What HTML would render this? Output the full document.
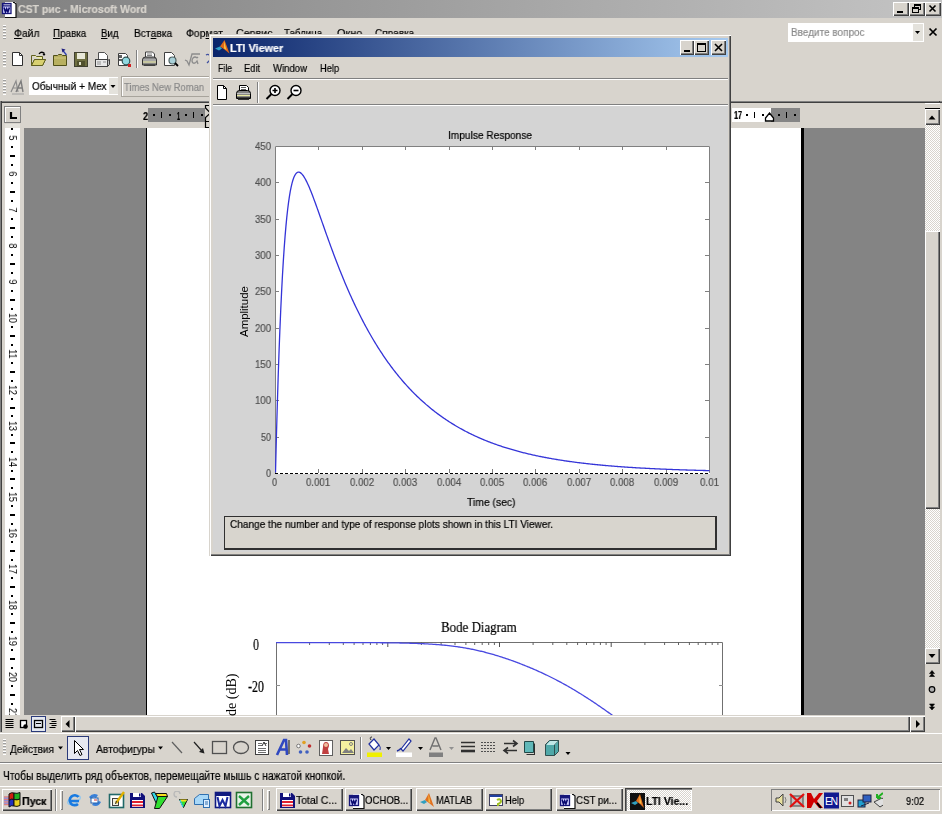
<!DOCTYPE html><html><head><meta charset="utf-8"><style>
html,body{margin:0;padding:0;}
body{width:942px;height:814px;position:relative;overflow:hidden;background:#D8D4CD;font-family:"Liberation Sans",sans-serif;font-size:11px;color:#000;}
div,svg{box-sizing:border-box;}
u{text-decoration:underline;text-underline-offset:1px;text-decoration-thickness:1px;}
</style></head><body>
<div style="position:absolute;left:0px;top:0px;width:942px;height:18px;background:linear-gradient(90deg,#808080,#C4C4C4);"></div>
<svg style="position:absolute;left:0px;top:0px;" width="18" height="18" viewBox="0 0 18 18"><rect x="5" y="2" width="11" height="15" fill="#fff"/><path d="M13 2.5 h1.5 l1.5 1.5 V17.5 H5" fill="none" stroke="#101010" stroke-width="1.2"/><rect x="2.5" y="3.5" width="8.5" height="10" fill="#D0D0FF" stroke="#16167A" stroke-width="1.3"/><rect x="3" y="4" width="8" height="2.5" fill="#16167A"/><path d="M3.5 4.8 h7" stroke="#fff" stroke-width="0.8"/><path d="M4 7.5 l1.5 4.5 l1.2 -3 l1.2 3 l1.5 -4.5" fill="none" stroke="#0A0A70" stroke-width="1.6"/></svg>
<div style="position:absolute;left:18.00px;top:4px;white-space:nowrap;font-family:'Liberation Sans',sans-serif;font-size:11px;line-height:11px;font-weight:bold;color:#D8D4CD;will-change:transform;-webkit-text-stroke:0.2px currentColor;transform-origin:0 0;transform:scaleX(0.9540);">CST рис - Microsoft Word</div>
<div style="position:absolute;left:893px;top:2px;width:16px;height:14px;background:#D8D4CD;box-shadow:inset 1px 1px 0 #fff,inset -1px -1px 0 #404040,inset -2px -2px 0 #808080;"></div>
<div style="position:absolute;left:909px;top:2px;width:16px;height:14px;background:#D8D4CD;box-shadow:inset 1px 1px 0 #fff,inset -1px -1px 0 #404040,inset -2px -2px 0 #808080;"></div>
<div style="position:absolute;left:925px;top:2px;width:16px;height:14px;background:#D8D4CD;box-shadow:inset 1px 1px 0 #fff,inset -1px -1px 0 #404040,inset -2px -2px 0 #808080;"></div>
<svg style="position:absolute;left:893px;top:2px;" width="48" height="14" viewBox="0 0 48 14"><rect x="4" y="9" width="6" height="2" fill="#000"/><rect x="21.5" y="2.5" width="6" height="5" fill="none" stroke="#000"/><rect x="21" y="2" width="7" height="2" fill="#000"/><rect x="19.5" y="5.5" width="6" height="5" fill="#D8D4CD" stroke="#000"/><rect x="19" y="5" width="7" height="2" fill="#000"/><path d="M36.5 3.5 L42.5 9.5 M42.5 3.5 L36.5 9.5" stroke="#000" stroke-width="1.6"/></svg>
<div style="position:absolute;left:3px;top:25px;width:3px;height:15px;background:repeating-linear-gradient(180deg,#fff 0 1px,#a0a0a0 1px 2px,transparent 2px 3px);"></div>
<div style="position:absolute;left:14.00px;top:28px;white-space:nowrap;font-family:'Liberation Sans',sans-serif;font-size:11px;line-height:11px;will-change:transform;-webkit-text-stroke:0.2px currentColor;transform-origin:0 0;transform:scaleX(0.9390);"><u>Ф</u>айл</div>
<div style="position:absolute;left:53.00px;top:28px;white-space:nowrap;font-family:'Liberation Sans',sans-serif;font-size:11px;line-height:11px;will-change:transform;-webkit-text-stroke:0.2px currentColor;transform-origin:0 0;transform:scaleX(0.8938);"><u>П</u>равка</div>
<div style="position:absolute;left:101.00px;top:28px;white-space:nowrap;font-family:'Liberation Sans',sans-serif;font-size:11px;line-height:11px;will-change:transform;-webkit-text-stroke:0.2px currentColor;transform-origin:0 0;transform:scaleX(0.8788);"><u>В</u>ид</div>
<div style="position:absolute;left:134.00px;top:28px;white-space:nowrap;font-family:'Liberation Sans',sans-serif;font-size:11px;line-height:11px;will-change:transform;-webkit-text-stroke:0.2px currentColor;transform-origin:0 0;transform:scaleX(0.9337);">Вст<u>а</u>вка</div>
<div style="position:absolute;left:186.00px;top:28px;white-space:nowrap;font-family:'Liberation Sans',sans-serif;font-size:11px;line-height:11px;will-change:transform;-webkit-text-stroke:0.2px currentColor;transform-origin:0 0;transform:scaleX(0.9478);">Фор<u>м</u>ат</div>
<div style="position:absolute;left:236.00px;top:28px;white-space:nowrap;font-family:'Liberation Sans',sans-serif;font-size:11px;line-height:11px;will-change:transform;-webkit-text-stroke:0.2px currentColor;transform-origin:0 0;transform:scaleX(0.9694);">С<u>е</u>рвис</div>
<div style="position:absolute;left:284.00px;top:28px;white-space:nowrap;font-family:'Liberation Sans',sans-serif;font-size:11px;line-height:11px;will-change:transform;-webkit-text-stroke:0.2px currentColor;transform-origin:0 0;transform:scaleX(0.8861);">Т<u>а</u>блица</div>
<div style="position:absolute;left:337.00px;top:28px;white-space:nowrap;font-family:'Liberation Sans',sans-serif;font-size:11px;line-height:11px;will-change:transform;-webkit-text-stroke:0.2px currentColor;transform-origin:0 0;transform:scaleX(0.9826);"><u>О</u>кно</div>
<div style="position:absolute;left:375.00px;top:28px;white-space:nowrap;font-family:'Liberation Sans',sans-serif;font-size:11px;line-height:11px;will-change:transform;-webkit-text-stroke:0.2px currentColor;transform-origin:0 0;transform:scaleX(0.9084);"><u>С</u>правка</div>
<div style="position:absolute;left:788px;top:23px;width:136px;height:19px;background:#fff;"></div>
<div style="position:absolute;left:913px;top:24px;width:10px;height:17px;background:#E4E2DC;"></div>
<svg style="position:absolute;left:913px;top:30px;" width="10" height="5" viewBox="0 0 10 5"><path d="M2 1 h5 l-2.5 3z" fill="#000"/></svg>
<div style="position:absolute;left:791.00px;top:27px;white-space:nowrap;font-family:'Liberation Sans',sans-serif;font-size:11px;line-height:11px;color:#8a8a8a;will-change:transform;-webkit-text-stroke:0.2px currentColor;transform-origin:0 0;transform:scaleX(0.9067);">Введите вопрос</div>
<svg style="position:absolute;left:928px;top:26px;" width="11" height="12" viewBox="0 0 11 12"><path d="M1.5 2.5 L8.5 9.5 M8.5 2.5 L1.5 9.5" stroke="#000" stroke-width="1.7"/></svg>
<div style="position:absolute;left:3px;top:51px;width:3px;height:16px;background:repeating-linear-gradient(180deg,#fff 0 1px,#a0a0a0 1px 2px,transparent 2px 3px);"></div>
<svg style="position:absolute;left:11px;top:51px;" width="14" height="16" viewBox="0 0 14 16"><path d="M1.5 1.5 h7 l3 3 v10 h-10z" fill="#fff" stroke="#303030"/><path d="M8.5 1.5 v3 h3" fill="none" stroke="#303030"/></svg>
<svg style="position:absolute;left:30px;top:51px;" width="17" height="16" viewBox="0 0 17 16"><path d="M1.5 4.5 h4 l1 1 h6 v3" fill="#F0F0A0" stroke="#606020"/><path d="M1.5 4.5 v10 h11 l3 -6 h-11 l-3 6" fill="#E8E88C" stroke="#606020"/><path d="M4.5 8.5 h11 l-3 6 h-11z" fill="#D8D070" stroke="#606020"/><path d="M9 3 q2 -3 5 -1 l0 2" fill="none" stroke="#000" stroke-width="1.3"/><path d="M12.5 3 h3 l-1.5 2z" fill="#000"/></svg>
<svg style="position:absolute;left:52px;top:47px;" width="16" height="20" viewBox="0 0 16 20"><path d="M1.5 8.5 h4 l1 -1 h3 l1 1 h4 v10 h-13z" fill="#B8B060" stroke="#505018"/><path d="M2 11 h12" stroke="#D0C880"/><path d="M14.5 8 L10.5 3" stroke="#3040B0" stroke-width="1.3" fill="none"/><path d="M9.5 1.5 l4 1 l-3 3z" fill="#202080"/></svg>
<svg style="position:absolute;left:73px;top:51px;" width="16" height="16" viewBox="0 0 16 16"><rect x="1.5" y="1.5" width="13" height="14" fill="#6E6E40" stroke="#404030"/><rect x="4" y="2" width="8" height="6" fill="#E8E8D8"/><rect x="4" y="10" width="8" height="5" fill="#50502C"/><rect x="6" y="11" width="2" height="3" fill="#E0E0C8"/></svg>
<svg style="position:absolute;left:94px;top:51px;" width="17" height="17" viewBox="0 0 17 17"><path d="M4.5 8 v-6.5 h6 l3 3 v4" fill="#fff" stroke="#505050"/><rect x="1.5" y="8.5" width="12" height="7" fill="#E8E8E8" stroke="#404040"/><path d="M3 11h4M3 13h4M9 11h3" stroke="#909090"/><path d="M13.5 9.5 v6 l2 -2 v-5z" fill="#C0C0C0" stroke="#404040"/></svg>
<svg style="position:absolute;left:116px;top:51px;" width="17" height="17" viewBox="0 0 17 17"><path d="M2.5 2.5 h7 l2 2 v10 h-9z" fill="#fff" stroke="#404040"/><rect x="3" y="4" width="3" height="3" fill="#606060"/><rect x="3" y="8" width="3" height="2" fill="#606060"/><circle cx="10" cy="10" r="3.8" fill="#90D8E0" stroke="#305050" stroke-width="1.2"/><rect x="12" y="13" width="3" height="3" fill="#D02020"/></svg>
<div style="position:absolute;left:136px;top:50px;width:2px;height:18px;border-left:1px solid #808080;border-right:1px solid #fff;"></div>
<svg style="position:absolute;left:141px;top:51px;" width="17" height="16" viewBox="0 0 17 16"><path d="M4.5 6 v-5 h7 l2 2 v3" fill="#fff" stroke="#404040"/><path d="M6 3h5M6 4.5h5" stroke="#808080"/><path d="M1.5 9 q0 -3 3 -3 h8 q3 0 3 3 v5 h-14z" fill="#888888" stroke="#303030"/><path d="M2 9 h13" stroke="#C8C8C8"/><path d="M2 11 h13" stroke="#F0F0B0" stroke-width="1.2"/><rect x="3" y="13.5" width="11" height="1.5" fill="#404040"/></svg>
<svg style="position:absolute;left:163px;top:51px;" width="17" height="17" viewBox="0 0 17 17"><path d="M1.5 1.5 h7 l3 3 v10 h-10z" fill="#fff" stroke="#404040"/><circle cx="9.5" cy="9.5" r="3.5" fill="#A8D0D8" stroke="#506060" stroke-width="1.2"/><path d="M12 12 l3 3" stroke="#000" stroke-width="1.8"/></svg>
<svg style="position:absolute;left:184px;top:51px;" width="17" height="16" viewBox="0 0 17 16"><path d="M1 9 l2 1 l2 4 l3 -11 h8" fill="none" stroke="#8c8c8c" stroke-width="1.3"/><path d="M13 7 q-2 -2 -4 0 q-2 3 0 5 q2 1 4 -2 l1 3 M13 7 l1 -1" fill="none" stroke="#8c8c8c" stroke-width="1.3"/></svg>
<svg style="position:absolute;left:205px;top:51px;" width="5" height="16" viewBox="0 0 5 16"><path d="M1 4 q3 -2 4 2 M2 12 l3 -3" stroke="#4050A0" stroke-width="1.3" fill="none"/></svg>
<div style="position:absolute;left:3px;top:79px;width:3px;height:16px;background:repeating-linear-gradient(180deg,#fff 0 1px,#a0a0a0 1px 2px,transparent 2px 3px);"></div>
<svg style="position:absolute;left:9px;top:79px;" width="17" height="16" viewBox="0 0 17 16"><path d="M2 13 l5 -11 l2 11 M4 9 h4" fill="none" stroke="#8c8c8c" stroke-width="1.2"/><path d="M7 13 l5 -11 l2 11 M9 9 h4" fill="none" stroke="#7c7c7c" stroke-width="1.4"/><path d="M3 15 h12" stroke="#a0a0a0"/></svg>
<div style="position:absolute;left:29px;top:77px;width:89px;height:18px;background:#fff;"></div>
<div style="position:absolute;left:109px;top:78px;width:9px;height:16px;background:#E4E2DC;"></div>
<svg style="position:absolute;left:109px;top:84px;" width="9" height="5" viewBox="0 0 9 5"><path d="M1.5 1 h5 l-2.5 3z" fill="#000"/></svg>
<div style="position:absolute;left:32.00px;top:81px;white-space:nowrap;font-family:'Liberation Sans',sans-serif;font-size:11px;line-height:11px;will-change:transform;-webkit-text-stroke:0.2px currentColor;transform-origin:0 0;transform:scaleX(0.9111);">Обычный + Мех</div>
<div style="position:absolute;left:121px;top:76px;width:92px;height:21px;border:1px solid #A8A49C;box-shadow:inset 1px 1px 0 #fff;"></div>
<div style="position:absolute;left:124.00px;top:82px;white-space:nowrap;font-family:'Liberation Sans',sans-serif;font-size:11px;line-height:11px;color:#8a8a8a;will-change:transform;-webkit-text-stroke:0.2px currentColor;transform-origin:0 0;transform:scaleX(0.8603);">Times New Roman</div>
<div style="position:absolute;left:0px;top:101px;width:942px;height:1px;background:#808080;"></div>
<div style="position:absolute;left:0px;top:102px;width:942px;height:1px;background:#404040;"></div>
<div style="position:absolute;left:1px;top:101px;width:1px;height:631px;background:#404040;"></div>
<div style="position:absolute;left:0px;top:101px;width:1px;height:631px;background:#808080;"></div>
<div style="position:absolute;left:939px;top:101px;width:1px;height:631px;background:#404040;"></div>
<div style="position:absolute;left:4px;top:106px;width:17px;height:17px;border:1px solid #808080;background:#D8D4CD;box-shadow:inset 1px 1px 0 #fff;"></div>
<svg style="position:absolute;left:4px;top:106px;" width="17" height="17" viewBox="0 0 17 17"><path d="M7 6 v6 h6" fill="none" stroke="#000" stroke-width="2.2"/></svg>
<div style="position:absolute;left:148px;top:108px;width:62px;height:14px;background:#858585;"></div>
<div style="position:absolute;left:732px;top:108px;width:39px;height:14px;background:#fff;"></div>
<div style="position:absolute;left:771px;top:108px;width:29px;height:14px;background:#858585;"></div>
<div style="position:absolute;left:143.00px;top:111px;white-space:nowrap;font-family:'Liberation Sans',sans-serif;font-size:11px;line-height:11px;font-weight:bold;will-change:transform;-webkit-text-stroke:0.2px currentColor;transform-origin:0 0;transform:scaleX(0.8333);">2</div>
<div style="position:absolute;left:205px;top:108px;width:5px;height:14px;background:#D8D4CD;"></div>
<svg style="position:absolute;left:204px;top:104px;" width="6" height="25" viewBox="0 0 6 25"><path d="M6 1.5 H1.5 V4 L6 8.5 M6 9.5 L1.5 13.5 V23.5 H6 M1.5 17.5 H6" fill="none" stroke="#000" stroke-width="1.2"/></svg>
<div style="position:absolute;left:177.00px;top:111px;white-space:nowrap;font-family:'Liberation Sans',sans-serif;font-size:11px;line-height:11px;font-weight:bold;will-change:transform;-webkit-text-stroke:0.2px currentColor;transform-origin:0 0;transform:scaleX(0.5000);">1</div>
<div style="position:absolute;left:153px;top:114px;width:2px;height:2px;background:#000;"></div>
<div style="position:absolute;left:169px;top:114px;width:2px;height:2px;background:#000;"></div>
<div style="position:absolute;left:185px;top:114px;width:2px;height:2px;background:#000;"></div>
<div style="position:absolute;left:201px;top:114px;width:2px;height:2px;background:#000;"></div>
<div style="position:absolute;left:746px;top:114px;width:2px;height:2px;background:#000;"></div>
<div style="position:absolute;left:762px;top:114px;width:2px;height:2px;background:#000;"></div>
<div style="position:absolute;left:778px;top:114px;width:2px;height:2px;background:#000;"></div>
<div style="position:absolute;left:794px;top:114px;width:2px;height:2px;background:#000;"></div>
<div style="position:absolute;left:161px;top:112px;width:1px;height:6px;background:#000;"></div>
<div style="position:absolute;left:193px;top:112px;width:1px;height:6px;background:#000;"></div>
<div style="position:absolute;left:754px;top:112px;width:1px;height:6px;background:#000;"></div>
<div style="position:absolute;left:786px;top:112px;width:1px;height:6px;background:#000;"></div>
<div style="position:absolute;left:734.00px;top:110px;white-space:nowrap;font-family:'Liberation Sans',sans-serif;font-size:11px;line-height:11px;font-weight:bold;will-change:transform;-webkit-text-stroke:0.2px currentColor;transform-origin:0 0;transform:scaleX(0.6602);">17</div>
<svg style="position:absolute;left:764px;top:112px;" width="11" height="11" viewBox="0 0 11 11"><path d="M5.5 1 l4 5 v3 h-8 v-3z" fill="#fff" stroke="#000" stroke-width="1.3"/></svg>
<div style="position:absolute;left:5px;top:124px;width:15px;height:591px;background:#fff;"></div>
<div style="position:absolute;left:5px;top:124px;width:15px;height:4px;background:#E4E2DC;"></div>
<div style="position:absolute;left:12px;top:138.4px;width:0;height:0;"><div style="position:absolute;left:0;top:0;white-space:nowrap;font-family:'Liberation Sans',sans-serif;font-size:10px;line-height:10px;transform-origin:50% 50%;will-change:transform;transform:translate(-50%,-50%) rotate(90deg) scaleX(0.9);">5</div></div>
<div style="position:absolute;left:11px;top:128px;width:2px;height:2px;background:#000;"></div>
<div style="position:absolute;left:11px;top:146px;width:2px;height:2px;background:#000;"></div>
<div style="position:absolute;left:12px;top:174.3px;width:0;height:0;"><div style="position:absolute;left:0;top:0;white-space:nowrap;font-family:'Liberation Sans',sans-serif;font-size:10px;line-height:10px;transform-origin:50% 50%;will-change:transform;transform:translate(-50%,-50%) rotate(90deg) scaleX(0.9);">6</div></div>
<div style="position:absolute;left:10px;top:155px;width:5px;height:2px;background:#000;"></div>
<div style="position:absolute;left:11px;top:164px;width:2px;height:2px;background:#000;"></div>
<div style="position:absolute;left:11px;top:182px;width:2px;height:2px;background:#000;"></div>
<div style="position:absolute;left:12px;top:210.2px;width:0;height:0;"><div style="position:absolute;left:0;top:0;white-space:nowrap;font-family:'Liberation Sans',sans-serif;font-size:10px;line-height:10px;transform-origin:50% 50%;will-change:transform;transform:translate(-50%,-50%) rotate(90deg) scaleX(0.9);">7</div></div>
<div style="position:absolute;left:10px;top:191px;width:5px;height:2px;background:#000;"></div>
<div style="position:absolute;left:11px;top:200px;width:2px;height:2px;background:#000;"></div>
<div style="position:absolute;left:11px;top:218px;width:2px;height:2px;background:#000;"></div>
<div style="position:absolute;left:12px;top:246.1px;width:0;height:0;"><div style="position:absolute;left:0;top:0;white-space:nowrap;font-family:'Liberation Sans',sans-serif;font-size:10px;line-height:10px;transform-origin:50% 50%;will-change:transform;transform:translate(-50%,-50%) rotate(90deg) scaleX(0.9);">8</div></div>
<div style="position:absolute;left:10px;top:227px;width:5px;height:2px;background:#000;"></div>
<div style="position:absolute;left:11px;top:236px;width:2px;height:2px;background:#000;"></div>
<div style="position:absolute;left:11px;top:254px;width:2px;height:2px;background:#000;"></div>
<div style="position:absolute;left:12px;top:282.0px;width:0;height:0;"><div style="position:absolute;left:0;top:0;white-space:nowrap;font-family:'Liberation Sans',sans-serif;font-size:10px;line-height:10px;transform-origin:50% 50%;will-change:transform;transform:translate(-50%,-50%) rotate(90deg) scaleX(0.9);">9</div></div>
<div style="position:absolute;left:10px;top:263px;width:5px;height:2px;background:#000;"></div>
<div style="position:absolute;left:11px;top:272px;width:2px;height:2px;background:#000;"></div>
<div style="position:absolute;left:11px;top:290px;width:2px;height:2px;background:#000;"></div>
<div style="position:absolute;left:12px;top:317.9px;width:0;height:0;"><div style="position:absolute;left:0;top:0;white-space:nowrap;font-family:'Liberation Sans',sans-serif;font-size:10px;line-height:10px;transform-origin:50% 50%;will-change:transform;transform:translate(-50%,-50%) rotate(90deg) scaleX(0.9);">10</div></div>
<div style="position:absolute;left:10px;top:299px;width:5px;height:2px;background:#000;"></div>
<div style="position:absolute;left:11px;top:308px;width:2px;height:2px;background:#000;"></div>
<div style="position:absolute;left:11px;top:326px;width:2px;height:2px;background:#000;"></div>
<div style="position:absolute;left:12px;top:353.8px;width:0;height:0;"><div style="position:absolute;left:0;top:0;white-space:nowrap;font-family:'Liberation Sans',sans-serif;font-size:10px;line-height:10px;transform-origin:50% 50%;will-change:transform;transform:translate(-50%,-50%) rotate(90deg) scaleX(0.9);">11</div></div>
<div style="position:absolute;left:10px;top:335px;width:5px;height:2px;background:#000;"></div>
<div style="position:absolute;left:11px;top:344px;width:2px;height:2px;background:#000;"></div>
<div style="position:absolute;left:11px;top:362px;width:2px;height:2px;background:#000;"></div>
<div style="position:absolute;left:12px;top:389.7px;width:0;height:0;"><div style="position:absolute;left:0;top:0;white-space:nowrap;font-family:'Liberation Sans',sans-serif;font-size:10px;line-height:10px;transform-origin:50% 50%;will-change:transform;transform:translate(-50%,-50%) rotate(90deg) scaleX(0.9);">12</div></div>
<div style="position:absolute;left:10px;top:371px;width:5px;height:2px;background:#000;"></div>
<div style="position:absolute;left:11px;top:380px;width:2px;height:2px;background:#000;"></div>
<div style="position:absolute;left:11px;top:398px;width:2px;height:2px;background:#000;"></div>
<div style="position:absolute;left:12px;top:425.6px;width:0;height:0;"><div style="position:absolute;left:0;top:0;white-space:nowrap;font-family:'Liberation Sans',sans-serif;font-size:10px;line-height:10px;transform-origin:50% 50%;will-change:transform;transform:translate(-50%,-50%) rotate(90deg) scaleX(0.9);">13</div></div>
<div style="position:absolute;left:10px;top:407px;width:5px;height:2px;background:#000;"></div>
<div style="position:absolute;left:11px;top:415px;width:2px;height:2px;background:#000;"></div>
<div style="position:absolute;left:11px;top:434px;width:2px;height:2px;background:#000;"></div>
<div style="position:absolute;left:12px;top:461.5px;width:0;height:0;"><div style="position:absolute;left:0;top:0;white-space:nowrap;font-family:'Liberation Sans',sans-serif;font-size:10px;line-height:10px;transform-origin:50% 50%;will-change:transform;transform:translate(-50%,-50%) rotate(90deg) scaleX(0.9);">14</div></div>
<div style="position:absolute;left:10px;top:442px;width:5px;height:2px;background:#000;"></div>
<div style="position:absolute;left:11px;top:451px;width:2px;height:2px;background:#000;"></div>
<div style="position:absolute;left:11px;top:470px;width:2px;height:2px;background:#000;"></div>
<div style="position:absolute;left:12px;top:497.4px;width:0;height:0;"><div style="position:absolute;left:0;top:0;white-space:nowrap;font-family:'Liberation Sans',sans-serif;font-size:10px;line-height:10px;transform-origin:50% 50%;will-change:transform;transform:translate(-50%,-50%) rotate(90deg) scaleX(0.9);">15</div></div>
<div style="position:absolute;left:10px;top:478px;width:5px;height:2px;background:#000;"></div>
<div style="position:absolute;left:11px;top:487px;width:2px;height:2px;background:#000;"></div>
<div style="position:absolute;left:11px;top:505px;width:2px;height:2px;background:#000;"></div>
<div style="position:absolute;left:12px;top:533.3px;width:0;height:0;"><div style="position:absolute;left:0;top:0;white-space:nowrap;font-family:'Liberation Sans',sans-serif;font-size:10px;line-height:10px;transform-origin:50% 50%;will-change:transform;transform:translate(-50%,-50%) rotate(90deg) scaleX(0.9);">16</div></div>
<div style="position:absolute;left:10px;top:514px;width:5px;height:2px;background:#000;"></div>
<div style="position:absolute;left:11px;top:523px;width:2px;height:2px;background:#000;"></div>
<div style="position:absolute;left:11px;top:541px;width:2px;height:2px;background:#000;"></div>
<div style="position:absolute;left:12px;top:569.2px;width:0;height:0;"><div style="position:absolute;left:0;top:0;white-space:nowrap;font-family:'Liberation Sans',sans-serif;font-size:10px;line-height:10px;transform-origin:50% 50%;will-change:transform;transform:translate(-50%,-50%) rotate(90deg) scaleX(0.9);">17</div></div>
<div style="position:absolute;left:10px;top:550px;width:5px;height:2px;background:#000;"></div>
<div style="position:absolute;left:11px;top:559px;width:2px;height:2px;background:#000;"></div>
<div style="position:absolute;left:11px;top:577px;width:2px;height:2px;background:#000;"></div>
<div style="position:absolute;left:12px;top:605.1px;width:0;height:0;"><div style="position:absolute;left:0;top:0;white-space:nowrap;font-family:'Liberation Sans',sans-serif;font-size:10px;line-height:10px;transform-origin:50% 50%;will-change:transform;transform:translate(-50%,-50%) rotate(90deg) scaleX(0.9);">18</div></div>
<div style="position:absolute;left:10px;top:586px;width:5px;height:2px;background:#000;"></div>
<div style="position:absolute;left:11px;top:595px;width:2px;height:2px;background:#000;"></div>
<div style="position:absolute;left:11px;top:613px;width:2px;height:2px;background:#000;"></div>
<div style="position:absolute;left:12px;top:641.0px;width:0;height:0;"><div style="position:absolute;left:0;top:0;white-space:nowrap;font-family:'Liberation Sans',sans-serif;font-size:10px;line-height:10px;transform-origin:50% 50%;will-change:transform;transform:translate(-50%,-50%) rotate(90deg) scaleX(0.9);">19</div></div>
<div style="position:absolute;left:10px;top:622px;width:5px;height:2px;background:#000;"></div>
<div style="position:absolute;left:11px;top:631px;width:2px;height:2px;background:#000;"></div>
<div style="position:absolute;left:11px;top:649px;width:2px;height:2px;background:#000;"></div>
<div style="position:absolute;left:12px;top:676.9px;width:0;height:0;"><div style="position:absolute;left:0;top:0;white-space:nowrap;font-family:'Liberation Sans',sans-serif;font-size:10px;line-height:10px;transform-origin:50% 50%;will-change:transform;transform:translate(-50%,-50%) rotate(90deg) scaleX(0.9);">20</div></div>
<div style="position:absolute;left:10px;top:658px;width:5px;height:2px;background:#000;"></div>
<div style="position:absolute;left:11px;top:667px;width:2px;height:2px;background:#000;"></div>
<div style="position:absolute;left:11px;top:685px;width:2px;height:2px;background:#000;"></div>
<div style="position:absolute;left:12px;top:712.8px;width:0;height:0;"><div style="position:absolute;left:0;top:0;white-space:nowrap;font-family:'Liberation Sans',sans-serif;font-size:10px;line-height:10px;transform-origin:50% 50%;will-change:transform;transform:translate(-50%,-50%) rotate(90deg) scaleX(0.9);">21</div></div>
<div style="position:absolute;left:10px;top:694px;width:5px;height:2px;background:#000;"></div>
<div style="position:absolute;left:11px;top:703px;width:2px;height:2px;background:#000;"></div>
<div style="position:absolute;left:24px;top:128px;width:901px;height:587px;background:#848484;"></div>
<div style="position:absolute;left:146px;top:128px;width:1px;height:587px;background:#000;"></div>
<div style="position:absolute;left:147px;top:128px;width:654px;height:587px;background:#fff;"></div>
<div style="position:absolute;left:801px;top:128px;width:3px;height:587px;background:#000;"></div>
<div style="position:absolute;left:925px;top:103px;width:15px;height:629px;background:repeating-conic-gradient(#fff 0 25%,#D8D4CD 0 50%) 0 0/2px 2px;"></div>
<div style="position:absolute;left:925px;top:103px;width:15px;height:6px;background:#D8D4CD;box-shadow:inset 0 1px 0 #fff,inset 0 -1px 0 #000;"></div>
<div style="position:absolute;left:925px;top:109px;width:15px;height:16px;background:#D8D4CD;box-shadow:inset 1px 1px 0 #fff,inset -1px -1px 0 #404040,inset -2px -2px 0 #808080;"></div>
<svg style="position:absolute;left:925px;top:109px;" width="15" height="16" viewBox="0 0 15 16"><path d="M3.5 10.5 h7 l-3.5 -4z" fill="#000"/></svg>
<div style="position:absolute;left:925px;top:231px;width:15px;height:278px;background:#D8D4CD;box-shadow:inset 1px 1px 0 #fff,inset -1px -1px 0 #404040,inset -2px -2px 0 #808080;"></div>
<div style="position:absolute;left:925px;top:648px;width:15px;height:16px;background:#D8D4CD;box-shadow:inset 1px 1px 0 #fff,inset -1px -1px 0 #404040,inset -2px -2px 0 #808080;"></div>
<svg style="position:absolute;left:925px;top:648px;" width="15" height="16" viewBox="0 0 15 16"><path d="M3.5 6 h7 l-3.5 4z" fill="#000"/></svg>
<div style="position:absolute;left:925px;top:664px;width:15px;height:68px;background:#D8D4CD;"></div>
<svg style="position:absolute;left:925px;top:664px;" width="15" height="51" viewBox="0 0 15 51"><path d="M4.5 9.5 h5 l-2.5 -3z M4.5 12.5 h5 l-2.5 -3z" fill="#000" stroke="#000" stroke-width="0.6"/><circle cx="7" cy="25.5" r="2.8" fill="#B0B0B0" stroke="#000" stroke-width="1.2"/><path d="M4.5 40 h5 l-2.5 3z M4.5 43 h5 l-2.5 3z" fill="#000" stroke="#000" stroke-width="0.6"/></svg>
<div style="position:absolute;left:2px;top:715px;width:923px;height:17px;background:#D8D4CD;"></div>
<svg style="position:absolute;left:4px;top:716px;" width="56" height="16" viewBox="0 0 56 16"><path d="M1.5 3.5h8M1.5 5.5h8M1.5 7.5h8M1.5 9.5h8M1.5 11.5h8" stroke="#000"/><rect x="16.5" y="4.5" width="6" height="7" fill="#fff" stroke="#000" stroke-width="1.3"/><circle cx="21.5" cy="10.5" r="2.2" fill="#000"/><rect x="27.5" y="0.5" width="14" height="15" fill="#E4E8F0" stroke="#2A3A7A"/><rect x="30.5" y="4.5" width="8" height="7" fill="none" stroke="#000" stroke-width="1.3"/><path d="M32 7.5h5" stroke="#000"/><path d="M45.5 3.5h6M47.5 5.5h5M45.5 7.5h7M47.5 9.5h5M45.5 11.5h6" stroke="#000"/></svg>
<div style="position:absolute;left:61px;top:716px;width:14px;height:16px;background:#D8D4CD;box-shadow:inset 1px 1px 0 #fff,inset -1px -1px 0 #404040,inset -2px -2px 0 #808080;"></div>
<svg style="position:absolute;left:61px;top:716px;" width="14" height="16" viewBox="0 0 14 16"><path d="M8.5 4 v8 l-4 -4z" fill="#000"/></svg>
<div style="position:absolute;left:75px;top:716px;width:835px;height:16px;background:#D8D4CD;box-shadow:inset 1px 1px 0 #fff,inset -1px -1px 0 #404040,inset -2px -2px 0 #808080;"></div>
<div style="position:absolute;left:910px;top:716px;width:15px;height:16px;background:#D8D4CD;box-shadow:inset 1px 1px 0 #fff,inset -1px -1px 0 #404040,inset -2px -2px 0 #808080;"></div>
<svg style="position:absolute;left:910px;top:716px;" width="15" height="16" viewBox="0 0 15 16"><path d="M6 4 v8 l4 -4z" fill="#000"/></svg>
<div style="position:absolute;left:0px;top:732px;width:942px;height:1px;background:#D8D4CD;"></div>
<div style="position:absolute;left:0px;top:733px;width:942px;height:1px;background:#fff;"></div>
<div style="position:absolute;left:3px;top:739px;width:3px;height:16px;background:repeating-linear-gradient(180deg,#fff 0 1px,#a0a0a0 1px 2px,transparent 2px 3px);"></div>
<div style="position:absolute;left:10.00px;top:744px;white-space:nowrap;font-family:'Liberation Sans',sans-serif;font-size:11px;line-height:11px;will-change:transform;-webkit-text-stroke:0.2px currentColor;transform-origin:0 0;transform:scaleX(0.9121);">Дейс<u>т</u>вия</div>
<svg style="position:absolute;left:57px;top:746px;" width="7" height="4" viewBox="0 0 7 4"><path d="M1 0.5h5l-2.5 3z" fill="#000"/></svg>
<div style="position:absolute;left:67px;top:736px;width:22px;height:24px;background:#E6E8F0;border:1px solid #2A3A7A;"></div>
<svg style="position:absolute;left:70px;top:739px;" width="16" height="18" viewBox="0 0 16 18"><path d="M4.5 1.5 v13 l3 -3 l2.5 5 l2 -1 l-2.5 -5 h4z" fill="#fff" stroke="#000"/></svg>
<div style="position:absolute;left:96.00px;top:744px;white-space:nowrap;font-family:'Liberation Sans',sans-serif;font-size:11px;line-height:11px;will-change:transform;-webkit-text-stroke:0.2px currentColor;transform-origin:0 0;transform:scaleX(0.9414);">Автофи<u>г</u>уры</div>
<svg style="position:absolute;left:157px;top:746px;" width="7" height="4" viewBox="0 0 7 4"><path d="M1 0.5h5l-2.5 3z" fill="#000"/></svg>
<svg style="position:absolute;left:165px;top:735px;" width="415" height="25" viewBox="0 0 415 25"><path d="M7 7 L17 18" stroke="#606060" stroke-width="1.2"/><path d="M29 7 L37 16" stroke="#202020" stroke-width="1.2"/><path d="M39.5 18.5 l-5.5 -1.5 l4 -4z" fill="#202020"/><rect x="47.5" y="6.5" width="14" height="12" fill="none" stroke="#505050" stroke-width="1.3"/><ellipse cx="76" cy="12.5" rx="7.5" ry="6" fill="none" stroke="#505050" stroke-width="1.3"/><rect x="90.5" y="5.5" width="13" height="14" fill="#fff" stroke="#404040"/><path d="M93 8.5h4 M93 10.5h4 M99 8.5h3 M93 13.5h8 M93 15.5h8 M93 17.5h8" stroke="#707070"/><path d="M97 11 l2 -4 l2 4" fill="none" stroke="#303030"/><path d="M112 20 l7 -15 h2 l1 15 M114.5 14.5 h6" fill="none" stroke="#3048C0" stroke-width="2.6"/><path d="M124 5 v14" stroke="#303030" stroke-width="1.2"/><circle cx="139" cy="7.5" r="1.8" fill="#E0A020"/><circle cx="144.5" cy="11" r="1.8" fill="#C03030"/><circle cx="142" cy="17" r="1.8" fill="#4060C0"/><circle cx="135.5" cy="17" r="1.8" fill="#4060C0"/><circle cx="133.5" cy="11" r="1.8" fill="#fff" stroke="#606060" stroke-width="0.8"/><rect x="154.5" y="5.5" width="13" height="15" fill="#fff" stroke="#606060"/><path d="M158 12 q0 -5 3 -5 q3 0 3 4 l-1 3 l1 5 h-7 z" fill="#C04040"/><circle cx="161" cy="10" r="2" fill="#F0C0A0"/><rect x="175.5" y="5.5" width="14" height="14" fill="#F4F0A0" stroke="#505050"/><path d="M177 18 l4 -5 l3 3 l2 -2 l3 4z" fill="#808080"/><circle cx="186" cy="9" r="1.5" fill="none" stroke="#808080"/></svg>
<div style="position:absolute;left:360px;top:737px;width:2px;height:22px;border-left:1px solid #808080;border-right:1px solid #fff;"></div>
<svg style="position:absolute;left:165px;top:735px;" width="415" height="25" viewBox="0 0 415 25"><path d="M204 9 l5 -5 l5 6 l-5 5z" fill="#fff" stroke="#2030A0" stroke-width="1.2"/><path d="M214 10 q2 2 1 5" stroke="#2030A0" fill="none"/><path d="M206 5 q-2 -3 1 -3" stroke="#303030" fill="none"/><rect x="202" y="17.5" width="15" height="4.5" fill="#F0F000"/><path d="M221 12 h5 l-2.5 3z" fill="#000"/><path d="M236 14 l8 -10 l2 2 l-8 10z" fill="#fff" stroke="#2030A0" stroke-width="1.2"/><path d="M232 16 q3 -1 4 -3" stroke="#2030A0" stroke-width="1.5" fill="none"/><rect x="231" y="17.5" width="16" height="4.5" fill="#fff"/><path d="M253 12 h5 l-2.5 3z" fill="#000"/><path d="M265 15 l5 -12 h1 l5 12 M267.5 11 h6" fill="none" stroke="#707070" stroke-width="1.4"/><rect x="264" y="17.5" width="14" height="4.5" fill="#808080"/><path d="M284 12 h5 l-2.5 3z" fill="#909090"/><path d="M296 7.5h14 M296 11.5h14" stroke="#303030" stroke-width="1.6"/><path d="M296 16h14" stroke="#303030" stroke-width="2.6"/><path d="M316 7.5h15 M316 10.5h15 M316 13.5h15 M316 16.5h15" stroke="#505050" stroke-dasharray="2 1"/><path d="M339 8.5h13 M348 5.5 l4 3 l-4 3 M339 15.5h13 M343 12.5 l-4 3 l4 3" fill="none" stroke="#303030" stroke-width="1.6"/><path d="M359.5 6.5 h9 v11 h-9z" fill="#60B8B8" stroke="#204848"/><path d="M369 8 v11 h-8 l1 1 h8 v-11z" fill="#303030"/><path d="M380.5 9.5 l4 -4 h9 v11 l-4 4 h-9z" fill="#50A8A8" stroke="#305050"/><path d="M380.5 9.5 h9 v11 M389.5 9.5 l4 -4" fill="none" stroke="#305050"/><path d="M381 10 l4 -4 h8 l-4 4z" fill="#C0E8E8"/><path d="M400.5 17 h5 l-2.5 3z" fill="#000"/></svg>
<div style="position:absolute;left:0px;top:762px;width:942px;height:1px;background:#808080;"></div>
<div style="position:absolute;left:0px;top:763px;width:942px;height:1px;background:#fff;"></div>
<div style="position:absolute;left:3.00px;top:770px;white-space:nowrap;font-family:'Liberation Sans',sans-serif;font-size:12px;line-height:12px;will-change:transform;-webkit-text-stroke:0.2px currentColor;transform-origin:0 0;transform:scaleX(0.8567);">Чтобы выделить ряд объектов, перемещайте мышь с нажатой кнопкой.</div>
<div style="position:absolute;left:0px;top:785px;width:942px;height:1px;background:#D8D4CD;"></div>
<div style="position:absolute;left:0px;top:786px;width:942px;height:1px;background:#fff;"></div>
<div style="position:absolute;left:2px;top:789px;width:50px;height:22px;background:#D8D4CD;box-shadow:inset 1px 1px 0 #fff,inset -1px -1px 0 #404040,inset -2px -2px 0 #808080;"></div>
<svg style="position:absolute;left:3px;top:791px;" width="19" height="18" viewBox="0 0 19 18"><path d="M1 6 h5 M1 8.5 h5 M1 11 h5 M1 13.5 h5" stroke-width="1.6" stroke="#E08080"/><path d="M1 7.2 h5 M1 9.7 h5 M1 12.2 h5" stroke="#8080E0" stroke-width="1"/><path d="M6 3 q2.5 -2 5 -1 v6.5 q-2.5 -1 -5 1z" fill="#D02010" stroke="#101010"/><path d="M11 2 q3 1 6 -0.5 v6.5 q-3 1.5 -6 0.5z" fill="#20B020" stroke="#101010"/><path d="M6 9.5 q2.5 -2 5 -1 v6.5 q-2.5 -1 -5 1z" fill="#2030C0" stroke="#101010"/><path d="M11 8.5 q3 1 6 -0.5 v6.5 q-3 1.5 -6 0.5z" fill="#E8D020" stroke="#101010"/></svg>
<div style="position:absolute;left:22.00px;top:796px;white-space:nowrap;font-family:'Liberation Sans',sans-serif;font-size:11px;line-height:11px;font-weight:bold;will-change:transform;-webkit-text-stroke:0.2px currentColor;transform-origin:0 0;transform:scaleX(0.9665);">Пуск</div>
<div style="position:absolute;left:55px;top:789px;width:2px;height:22px;border-left:1px solid #808080;border-right:1px solid #fff;"></div>
<div style="position:absolute;left:60px;top:790px;width:3px;height:20px;background:#D8D4CD;box-shadow:inset 1px 1px 0 #fff,inset -1px -1px 0 #808080;"></div>
<svg style="position:absolute;left:67px;top:791px;" width="200" height="18" viewBox="0 0 200 18"><ellipse cx="7" cy="9" rx="7" ry="3.5" fill="none" stroke="#90C8F0" stroke-width="1.2" transform="rotate(-30 7 9)"/><path d="M12 10 H3 M11.5 6 A5 5 0 1 0 11 13" fill="none" stroke="#1A7AE0" stroke-width="2.6"/><path d="M22 6 q4 -5 9 -2 l-2 3 q-3 -2 -5 1z" fill="#3A80D8"/><path d="M34 11 q-3 6 -9 3 l2 -3 q3 2 5 -1z" fill="#3A80D8"/><rect x="24" y="7" width="7" height="5" fill="#fff" stroke="#2060B0"/><path d="M27 9 h3" stroke="#D03030"/><rect x="42.5" y="3.5" width="14" height="13" fill="#fff" stroke="#206868" stroke-width="1.6"/><rect x="45.5" y="7.5" width="6" height="7" fill="#F0F0E0" stroke="#404040"/><path d="M49 12 l8 -11" stroke="#E0B000" stroke-width="2.4"/><path d="M48.5 13 l1 -3" stroke="#303030"/><path d="M63 2 h12 l3 3 v12 h-15z" fill="#10107A"/><rect x="66" y="2" width="8" height="4" fill="#fff"/><rect x="72" y="2.5" width="1.5" height="3" fill="#10107A"/><rect x="65" y="9" width="11" height="7" fill="#fff"/><rect x="65" y="10" width="11" height="2" fill="#E02030"/><rect x="65" y="13.5" width="11" height="1.8" fill="#E02030"/><path d="M84.5 2 l3 -1 l5 9 l-3 3z" fill="#30D8E8" stroke="#101010"/><path d="M88.5 2.5 h11 l1 3 h-10z" fill="#F8E020" stroke="#101010"/><path d="M91 5.5 h9.5 l-8 12 h-5z" fill="#30E030" stroke="#101010"/><path d="M110 6 a3 3 0 1 1 3 -3" fill="none" stroke="#B8B8B8" stroke-width="1.3"/><path d="M112.5 8.5 h8 l-4 8z" fill="#30E030" stroke="#101010"/><path d="M113 8.5 h7 l-0.8 2 h-5.5z" fill="#F8E020"/><path d="M113 9 l3 7" stroke="#30D8E8" stroke-width="1.2"/><path d="M127.5 7.5 l5 -4 h9 v6 l-5 4 h-9z" fill="#A8D8F8" stroke="#3070B0"/><rect x="136.5" y="8.5" width="6" height="8" fill="#E0F0FF" stroke="#3070B0"/><path d="M138 11h3M138 13h3" stroke="#3070B0"/><rect x="148.5" y="1.5" width="15" height="15" fill="#fff" stroke="#101A80" stroke-width="1.6"/><rect x="149" y="2" width="14" height="3" fill="#101A80"/><path d="M150.5 6 l2 9 l3 -6 l3 6 l2 -9" fill="none" stroke="#1A2AA0" stroke-width="2"/><rect x="169.5" y="1.5" width="15" height="15" fill="#E8F4E8" stroke="#207030" stroke-width="1.6"/><path d="M172 5 l10 9 M182 5 l-10 9" stroke="#20A040" stroke-width="2.4"/></svg>
<div style="position:absolute;left:262px;top:789px;width:2px;height:22px;border-left:1px solid #808080;border-right:1px solid #fff;"></div>
<div style="position:absolute;left:267px;top:790px;width:3px;height:20px;background:#D8D4CD;box-shadow:inset 1px 1px 0 #fff,inset -1px -1px 0 #808080;"></div>
<div style="position:absolute;left:276px;top:788px;width:67px;height:23px;background:#D8D4CD;box-shadow:inset 1px 1px 0 #fff,inset -1px -1px 0 #404040,inset -2px -2px 0 #808080;"></div>
<div style="position:absolute;left:296.00px;top:795px;white-space:nowrap;font-family:'Liberation Sans',sans-serif;font-size:11px;line-height:11px;will-change:transform;-webkit-text-stroke:0.2px currentColor;transform-origin:0 0;transform:scaleX(0.9458);">Total C...</div>
<div style="position:absolute;left:345px;top:788px;width:67px;height:23px;background:#D8D4CD;box-shadow:inset 1px 1px 0 #fff,inset -1px -1px 0 #404040,inset -2px -2px 0 #808080;"></div>
<div style="position:absolute;left:365.00px;top:795px;white-space:nowrap;font-family:'Liberation Sans',sans-serif;font-size:11px;line-height:11px;will-change:transform;-webkit-text-stroke:0.2px currentColor;transform-origin:0 0;transform:scaleX(0.8696);">ОСНОВ...</div>
<div style="position:absolute;left:416px;top:788px;width:67px;height:23px;background:#D8D4CD;box-shadow:inset 1px 1px 0 #fff,inset -1px -1px 0 #404040,inset -2px -2px 0 #808080;"></div>
<div style="position:absolute;left:436.00px;top:795px;white-space:nowrap;font-family:'Liberation Sans',sans-serif;font-size:11px;line-height:11px;will-change:transform;-webkit-text-stroke:0.2px currentColor;transform-origin:0 0;transform:scaleX(0.8400);">MATLAB</div>
<div style="position:absolute;left:485px;top:788px;width:67px;height:23px;background:#D8D4CD;box-shadow:inset 1px 1px 0 #fff,inset -1px -1px 0 #404040,inset -2px -2px 0 #808080;"></div>
<div style="position:absolute;left:505.00px;top:795px;white-space:nowrap;font-family:'Liberation Sans',sans-serif;font-size:11px;line-height:11px;will-change:transform;-webkit-text-stroke:0.2px currentColor;transform-origin:0 0;transform:scaleX(0.8442);">Help</div>
<div style="position:absolute;left:556px;top:788px;width:67px;height:23px;background:#D8D4CD;box-shadow:inset 1px 1px 0 #fff,inset -1px -1px 0 #404040,inset -2px -2px 0 #808080;"></div>
<div style="position:absolute;left:576.00px;top:795px;white-space:nowrap;font-family:'Liberation Sans',sans-serif;font-size:11px;line-height:11px;will-change:transform;-webkit-text-stroke:0.2px currentColor;transform-origin:0 0;transform:scaleX(0.8830);">CST ри...</div>
<svg style="position:absolute;left:279px;top:792px;" width="17" height="17" viewBox="0 0 17 17"><path d="M1 1 h12 l3 3 v12 h-15z" fill="#10107A"/><rect x="4" y="1" width="8" height="4" fill="#fff"/><rect x="10" y="1.5" width="1.5" height="3" fill="#10107A"/><rect x="3" y="8" width="11" height="7" fill="#fff"/><rect x="3" y="9" width="11" height="2" fill="#E02030"/><rect x="3" y="12.5" width="11" height="1.8" fill="#E02030"/></svg>
<svg style="position:absolute;left:348px;top:792px;" width="17" height="17" viewBox="0 0 17 17"><rect x="5" y="2" width="11" height="14" fill="#fff"/><path d="M13 2.5 h1.5 l1.5 1.5 V16.5 H5" fill="none" stroke="#101010" stroke-width="1.2"/><rect x="1.5" y="3.5" width="9" height="10" fill="#D0D0FF" stroke="#16167A" stroke-width="1.3"/><rect x="2" y="4" width="8.5" height="2.5" fill="#16167A"/><path d="M3 7.5 l1.5 4.5 l1.2 -3 l1.2 3 l1.5 -4.5" fill="none" stroke="#0A0A70" stroke-width="1.6"/></svg>
<svg style="position:absolute;left:419px;top:792px;" width="17" height="17" viewBox="0 0 17 17"><path d="M1 10 l5 -2 l2 2 l-3 2z" fill="#30A0C0"/><path d="M6 8 l4 -7 l5 14 l-5 -4z" fill="#E07020"/><path d="M9.5 2 l2 9 l-2 -1z" fill="#F8C040"/></svg>
<svg style="position:absolute;left:488px;top:792px;" width="17" height="17" viewBox="0 0 17 17"><rect x="1.5" y="2.5" width="13" height="11" fill="#fff" stroke="#404060"/><rect x="2" y="3" width="12" height="2" fill="#2040A0"/><path d="M9 8 q3 -2 4 1 q0 2 -3 3 v2" fill="none" stroke="#A0C020" stroke-width="2"/></svg>
<svg style="position:absolute;left:559px;top:792px;" width="17" height="17" viewBox="0 0 17 17"><rect x="5" y="2" width="11" height="14" fill="#fff"/><path d="M13 2.5 h1.5 l1.5 1.5 V16.5 H5" fill="none" stroke="#101010" stroke-width="1.2"/><rect x="1.5" y="3.5" width="9" height="10" fill="#D0D0FF" stroke="#16167A" stroke-width="1.3"/><rect x="2" y="4" width="8.5" height="2.5" fill="#16167A"/><path d="M3 7.5 l1.5 4.5 l1.2 -3 l1.2 3 l1.5 -4.5" fill="none" stroke="#0A0A70" stroke-width="1.6"/></svg>
<div style="position:absolute;left:625px;top:788px;width:67px;height:23px;background:repeating-conic-gradient(#fff 0 25%,#D8D4CD 0 50%) 0 0/2px 2px;box-shadow:inset 1px 1px 0 #404040,inset 2px 2px 0 #808080,inset -1px -1px 0 #fff;"></div>
<svg style="position:absolute;left:630px;top:793px;" width="15" height="17" viewBox="0 0 15 17"><rect x="0" y="0" width="15" height="17" fill="#101010"/><path d="M1 10 l5 -2 l2 2 l-3 2z" fill="#30A0C0"/><path d="M6 8 l4 -7 l4 14 l-4 -4z" fill="#E07020"/><path d="M9.5 2 l2 9 l-2 -1z" fill="#F8C040"/></svg>
<div style="position:absolute;left:646.00px;top:796px;white-space:nowrap;font-family:'Liberation Sans',sans-serif;font-size:11px;line-height:11px;font-weight:bold;will-change:transform;-webkit-text-stroke:0.2px currentColor;transform-origin:0 0;transform:scaleX(0.9511);">LTI Vie...</div>
<div style="position:absolute;left:771px;top:789px;width:169px;height:22px;box-shadow:inset 1px 1px 0 #808080,inset -1px -1px 0 #fff;"></div>
<svg style="position:absolute;left:773px;top:791px;" width="110" height="18" viewBox="0 0 110 18"><path d="M3 7 h3 l4 -4 v12 l-4 -4 h-3z" fill="#E8E0A0" stroke="#404040"/><path d="M12 6 q2 3 0 6" stroke="#808080" fill="none"/><rect x="18" y="5" width="12" height="10" fill="#C0C0C0" stroke="#404040"/><path d="M17 3 L31 16 M31 3 L17 16" stroke="#E01010" stroke-width="2.2"/><path d="M34 2 h4 l3 6 l5 -6 h4 l-6 8 l6 7 h-4 l-5 -6 l-3 6 h-4z" fill="#D00000"/><path d="M44 12 l4 5" stroke="#000" stroke-width="2"/><rect x="51" y="1.5" width="15" height="16" fill="#101A90"/><text x="52" y="14" font-family="Liberation Sans" font-size="10.5" fill="#fff" textLength="13">EN</text><rect x="68.5" y="4.5" width="12" height="11" fill="#E0E0E0" stroke="#505050"/><rect x="71" y="7" width="4" height="3" fill="#808080"/><circle cx="77" cy="12" r="1.5" fill="#D02020"/><rect x="85" y="9" width="7" height="7" fill="#20A0D0" stroke="#202040"/><rect x="90" y="4" width="8" height="7" fill="#3060C0" stroke="#202040"/><path d="M88 15 l8 -3" stroke="#202040"/><path d="M101 11 l8 -4 l6 4 l-8 5z" fill="#E0E0E0" stroke="#404040"/><path d="M104 7 l6 -5 M104 7 h4 M104 7 v-4" stroke="#20B020" stroke-width="2" fill="none"/></svg>
<div style="position:absolute;left:906.00px;top:796px;white-space:nowrap;font-family:'Liberation Sans',sans-serif;font-size:11px;line-height:11px;will-change:transform;-webkit-text-stroke:0.2px currentColor;transform-origin:0 0;transform:scaleX(0.8454);">9:02</div>
<div style="position:absolute;left:441.00px;top:620px;white-space:nowrap;font-family:'Liberation Serif',serif;font-size:15px;line-height:15px;will-change:transform;-webkit-text-stroke:0.2px currentColor;transform-origin:0 0;transform:scaleX(0.8615);">Bode Diagram</div>
<svg style="position:absolute;left:276px;top:642px;overflow:hidden;" width="447" height="73" viewBox="0 0 447 73"><path d="M0.5 73 V0.5 H446.5 V73" fill="none" stroke="#707070"/><path d="M33.6 0 v3" stroke="#606060"/><path d="M53.3 0 v3" stroke="#606060"/><path d="M67.3 0 v3" stroke="#606060"/><path d="M78.1 0 v3" stroke="#606060"/><path d="M87.0 0 v3" stroke="#606060"/><path d="M94.4 0 v3" stroke="#606060"/><path d="M100.9 0 v3" stroke="#606060"/><path d="M106.6 0 v3" stroke="#606060"/><path d="M111.8 0 v5" stroke="#505050"/><path d="M145.4 0 v3" stroke="#606060"/><path d="M165.1 0 v3" stroke="#606060"/><path d="M179.0 0 v3" stroke="#606060"/><path d="M189.9 0 v3" stroke="#606060"/><path d="M198.7 0 v3" stroke="#606060"/><path d="M206.2 0 v3" stroke="#606060"/><path d="M212.7 0 v3" stroke="#606060"/><path d="M218.4 0 v3" stroke="#606060"/><path d="M223.5 0 v5" stroke="#505050"/><path d="M257.1 0 v3" stroke="#606060"/><path d="M276.8 0 v3" stroke="#606060"/><path d="M290.8 0 v3" stroke="#606060"/><path d="M301.6 0 v3" stroke="#606060"/><path d="M310.5 0 v3" stroke="#606060"/><path d="M317.9 0 v3" stroke="#606060"/><path d="M324.4 0 v3" stroke="#606060"/><path d="M330.1 0 v3" stroke="#606060"/><path d="M335.2 0 v5" stroke="#505050"/><path d="M368.9 0 v3" stroke="#606060"/><path d="M388.6 0 v3" stroke="#606060"/><path d="M402.5 0 v3" stroke="#606060"/><path d="M413.4 0 v3" stroke="#606060"/><path d="M422.2 0 v3" stroke="#606060"/><path d="M429.7 0 v3" stroke="#606060"/><path d="M436.2 0 v3" stroke="#606060"/><path d="M441.9 0 v3" stroke="#606060"/><path d="M0 43.5 h4 M447 43.5 h-4" stroke="#909090"/><polyline points="0.0,0.50 1.0,0.50 2.0,0.50 3.0,0.50 4.0,0.50 5.0,0.50 6.0,0.50 7.0,0.50 8.0,0.50 9.0,0.50 10.0,0.50 11.0,0.50 12.0,0.50 13.0,0.51 14.0,0.51 15.0,0.51 16.0,0.51 17.0,0.51 18.0,0.51 19.0,0.51 20.0,0.51 21.0,0.51 22.0,0.51 23.0,0.51 24.0,0.51 25.0,0.51 26.0,0.51 27.0,0.51 28.0,0.51 29.0,0.51 30.0,0.51 31.0,0.51 32.0,0.51 33.0,0.51 34.0,0.51 35.0,0.51 36.0,0.51 37.0,0.51 38.0,0.51 39.0,0.52 40.0,0.52 41.0,0.52 42.0,0.52 43.0,0.52 44.0,0.52 45.0,0.52 46.0,0.52 47.0,0.52 48.0,0.52 49.0,0.52 50.0,0.52 51.0,0.52 52.0,0.53 53.0,0.53 54.0,0.53 55.0,0.53 56.0,0.53 57.0,0.53 58.0,0.53 59.0,0.53 60.0,0.54 61.0,0.54 62.0,0.54 63.0,0.54 64.0,0.54 65.0,0.54 66.0,0.55 67.0,0.55 68.0,0.55 69.0,0.55 70.0,0.55 71.0,0.56 72.0,0.56 73.0,0.56 74.0,0.56 75.0,0.57 76.0,0.57 77.0,0.57 78.0,0.57 79.0,0.58 80.0,0.58 81.0,0.58 82.0,0.59 83.0,0.59 84.0,0.60 85.0,0.60 86.0,0.60 87.0,0.61 88.0,0.61 89.0,0.62 90.0,0.62 91.0,0.63 92.0,0.63 93.0,0.64 94.0,0.64 95.0,0.65 96.0,0.66 97.0,0.66 98.0,0.67 99.0,0.68 100.0,0.68 101.0,0.69 102.0,0.70 103.0,0.71 104.0,0.72 105.0,0.73 106.0,0.74 107.0,0.75 108.0,0.76 109.0,0.77 110.0,0.78 111.0,0.79 112.0,0.80 113.0,0.81 114.0,0.83 115.0,0.84 116.0,0.85 117.0,0.87 118.0,0.88 119.0,0.90 120.0,0.92 121.0,0.93 122.0,0.95 123.0,0.97 124.0,0.99 125.0,1.01 126.0,1.03 127.0,1.05 128.0,1.07 129.0,1.10 130.0,1.12 131.0,1.15 132.0,1.17 133.0,1.20 134.0,1.23 135.0,1.26 136.0,1.29 137.0,1.32 138.0,1.35 139.0,1.39 140.0,1.42 141.0,1.46 142.0,1.50 143.0,1.54 144.0,1.58 145.0,1.62 146.0,1.67 147.0,1.71 148.0,1.76 149.0,1.81 150.0,1.86 151.0,1.91 152.0,1.97 153.0,2.03 154.0,2.09 155.0,2.15 156.0,2.21 157.0,2.28 158.0,2.35 159.0,2.42 160.0,2.49 161.0,2.56 162.0,2.64 163.0,2.72 164.0,2.81 165.0,2.89 166.0,2.98 167.0,3.07 168.0,3.17 169.0,3.26 170.0,3.37 171.0,3.47 172.0,3.58 173.0,3.69 174.0,3.80 175.0,3.92 176.0,4.04 177.0,4.16 178.0,4.29 179.0,4.42 180.0,4.56 181.0,4.70 182.0,4.84 183.0,4.99 184.0,5.14 185.0,5.29 186.0,5.45 187.0,5.61 188.0,5.78 189.0,5.95 190.0,6.12 191.0,6.30 192.0,6.49 193.0,6.67 194.0,6.86 195.0,7.06 196.0,7.26 197.0,7.46 198.0,7.67 199.0,7.88 200.0,8.10 201.0,8.32 202.0,8.55 203.0,8.78 204.0,9.01 205.0,9.25 206.0,9.49 207.0,9.74 208.0,9.99 209.0,10.25 210.0,10.51 211.0,10.77 212.0,11.04 213.0,11.31 214.0,11.59 215.0,11.87 216.0,12.15 217.0,12.44 218.0,12.73 219.0,13.02 220.0,13.32 221.0,13.63 222.0,13.93 223.0,14.25 224.0,14.56 225.0,14.88 226.0,15.20 227.0,15.53 228.0,15.86 229.0,16.19 230.0,16.53 231.0,16.87 232.0,17.21 233.0,17.56 234.0,17.91 235.0,18.26 236.0,18.62 237.0,18.98 238.0,19.34 239.0,19.71 240.0,20.08 241.0,20.46 242.0,20.83 243.0,21.21 244.0,21.60 245.0,21.99 246.0,22.38 247.0,22.77 248.0,23.17 249.0,23.57 250.0,23.98 251.0,24.38 252.0,24.79 253.0,25.21 254.0,25.63 255.0,26.05 256.0,26.47 257.0,26.90 258.0,27.33 259.0,27.77 260.0,28.21 261.0,28.65 262.0,29.10 263.0,29.55 264.0,30.00 265.0,30.46 266.0,30.92 267.0,31.38 268.0,31.85 269.0,32.32 270.0,32.80 271.0,33.28 272.0,33.76 273.0,34.25 274.0,34.74 275.0,35.24 276.0,35.74 277.0,36.24 278.0,36.75 279.0,37.26 280.0,37.78 281.0,38.30 282.0,38.82 283.0,39.35 284.0,39.89 285.0,40.42 286.0,40.97 287.0,41.51 288.0,42.06 289.0,42.62 290.0,43.18 291.0,43.74 292.0,44.31 293.0,44.88 294.0,45.45 295.0,46.03 296.0,46.62 297.0,47.21 298.0,47.80 299.0,48.40 300.0,49.00 301.0,49.60 302.0,50.21 303.0,50.83 304.0,51.44 305.0,52.07 306.0,52.69 307.0,53.32 308.0,53.95 309.0,54.59 310.0,55.23 311.0,55.87 312.0,56.52 313.0,57.17 314.0,57.83 315.0,58.49 316.0,59.15 317.0,59.81 318.0,60.48 319.0,61.15 320.0,61.83 321.0,62.50 322.0,63.18 323.0,63.87 324.0,64.55 325.0,65.24 326.0,65.93 327.0,66.63 328.0,67.33 329.0,68.02 330.0,68.73 331.0,69.43 332.0,70.14 333.0,70.85 334.0,71.56 335.0,72.27 336.0,72.99 337.0,73.70 338.0,74.42 339.0,75.14 340.0,75.87 341.0,76.59 342.0,77.32 343.0,78.04 344.0,78.77 345.0,79.51 346.0,80.24 347.0,80.97 348.0,81.71 349.0,82.45 350.0,83.18 351.0,83.92 352.0,84.66 353.0,85.41 354.0,86.15 355.0,86.89 356.0,87.64 357.0,88.39 358.0,89.13 359.0,89.88 360.0,90.63 361.0,91.38 362.0,92.13 363.0,92.89 364.0,93.64 365.0,94.39 366.0,95.15 367.0,95.90 368.0,96.66 369.0,97.41 370.0,98.17 371.0,98.93 372.0,99.69 373.0,100.45 374.0,101.21 375.0,101.97 376.0,102.73 377.0,103.49 378.0,104.25 379.0,105.01 380.0,105.77 381.0,106.54 382.0,107.30 383.0,108.06 384.0,108.83 385.0,109.59 386.0,110.36 387.0,111.12 388.0,111.89 389.0,112.65 390.0,113.42 391.0,114.18 392.0,114.95 393.0,115.72 394.0,116.49 395.0,117.25 396.0,118.02 397.0,118.79 398.0,119.56 399.0,120.32 400.0,121.09 401.0,121.86 402.0,122.63 403.0,123.40 404.0,124.17 405.0,124.94 406.0,125.71 407.0,126.48 408.0,127.25 409.0,128.02 410.0,128.79 411.0,129.56 412.0,130.33 413.0,131.10 414.0,131.87 415.0,132.64 416.0,133.41 417.0,134.18 418.0,134.95 419.0,135.72 420.0,136.49 421.0,137.26 422.0,138.03 423.0,138.80 424.0,139.58 425.0,140.35 426.0,141.12 427.0,141.89 428.0,142.66 429.0,143.43 430.0,144.21 431.0,144.98 432.0,145.75 433.0,146.52 434.0,147.29 435.0,148.07 436.0,148.84 437.0,149.61 438.0,150.38 439.0,151.15 440.0,151.93 441.0,152.70 442.0,153.47 443.0,154.24 444.0,155.02 445.0,155.79 446.0,156.56 447.0,157.33" fill="none" stroke="#4848E0" stroke-width="1.3"/></svg>
<div style="position:absolute;left:253.00px;top:637px;white-space:nowrap;font-family:'Liberation Serif',serif;font-size:16px;line-height:16px;will-change:transform;-webkit-text-stroke:0.2px currentColor;transform-origin:0 0;transform:scaleX(0.7500);">0</div>
<div style="position:absolute;left:248.00px;top:679px;white-space:nowrap;font-family:'Liberation Serif',serif;font-size:16px;line-height:16px;will-change:transform;-webkit-text-stroke:0.2px currentColor;transform-origin:0 0;transform:scaleX(0.7502);">-20</div>
<div style="position:absolute;left:225px;top:716px;white-space:nowrap;font-family:'Liberation Serif',serif;font-size:14px;line-height:14px;will-change:transform;transform-origin:0 0;transform:rotate(-90deg);">de (dB)</div>
<div style="position:absolute;left:209px;top:34px;width:522px;height:522px;background:#D8D4CD;box-shadow:inset 1px 1px 0 #D8D4CD,inset 2px 2px 0 #fff,inset -1px -1px 0 #404040,inset -2px -2px 0 #808080;"></div>
<div style="position:absolute;left:213px;top:38px;width:515px;height:19px;background:linear-gradient(90deg,#0A246A,#A6CAF0);"></div>
<svg style="position:absolute;left:214px;top:39px;" width="17" height="16" viewBox="0 0 17 16"><path d="M1 9.5 l5 -2 l2 2 l-3 2z" fill="#30A0C8"/><path d="M6 7.5 l4.5 -6.5 l5 13.5 l-5 -4z" fill="#E06818"/><path d="M10 2 l2.5 9 l-2.5 -1.5z" fill="#F8C040"/></svg>
<div style="position:absolute;left:230.00px;top:43px;white-space:nowrap;font-family:'Liberation Sans',sans-serif;font-size:11px;line-height:11px;font-weight:bold;color:#fff;will-change:transform;-webkit-text-stroke:0.2px currentColor;transform-origin:0 0;transform:scaleX(0.9868);">LTI Viewer</div>
<div style="position:absolute;left:680px;top:40px;width:14px;height:15px;background:#D8D4CD;box-shadow:inset 1px 1px 0 #fff,inset -1px -1px 0 #404040,inset -2px -2px 0 #808080;"></div>
<div style="position:absolute;left:694px;top:40px;width:15px;height:15px;background:#D8D4CD;box-shadow:inset 1px 1px 0 #fff,inset -1px -1px 0 #404040,inset -2px -2px 0 #808080;"></div>
<div style="position:absolute;left:711px;top:40px;width:15px;height:15px;background:#D8D4CD;box-shadow:inset 1px 1px 0 #fff,inset -1px -1px 0 #404040,inset -2px -2px 0 #808080;"></div>
<svg style="position:absolute;left:680px;top:40px;" width="46" height="15" viewBox="0 0 46 15"><rect x="4" y="10" width="6" height="2" fill="#000"/><rect x="17.5" y="3.5" width="8" height="8" fill="none" stroke="#000"/><rect x="17" y="3" width="9" height="2" fill="#000"/><path d="M35 4 L42 11 M42 4 L35 11" stroke="#000" stroke-width="1.6"/></svg>
<div style="position:absolute;left:218.00px;top:63px;white-space:nowrap;font-family:'Liberation Sans',sans-serif;font-size:11px;line-height:11px;will-change:transform;-webkit-text-stroke:0.2px currentColor;transform-origin:0 0;transform:scaleX(0.7951);">File</div>
<div style="position:absolute;left:244.00px;top:63px;white-space:nowrap;font-family:'Liberation Sans',sans-serif;font-size:11px;line-height:11px;will-change:transform;-webkit-text-stroke:0.2px currentColor;transform-origin:0 0;transform:scaleX(0.8466);">Edit</div>
<div style="position:absolute;left:273.00px;top:63px;white-space:nowrap;font-family:'Liberation Sans',sans-serif;font-size:11px;line-height:11px;will-change:transform;-webkit-text-stroke:0.2px currentColor;transform-origin:0 0;transform:scaleX(0.8678);">Window</div>
<div style="position:absolute;left:320.00px;top:63px;white-space:nowrap;font-family:'Liberation Sans',sans-serif;font-size:11px;line-height:11px;will-change:transform;-webkit-text-stroke:0.2px currentColor;transform-origin:0 0;transform:scaleX(0.8442);">Help</div>
<div style="position:absolute;left:213px;top:78px;width:515px;height:2px;border-top:1px solid #808080;border-bottom:1px solid #fff;"></div>
<svg style="position:absolute;left:216px;top:85px;" width="13" height="16" viewBox="0 0 13 16"><path d="M1.5 0.5 h6 l3 3 v11 h-9z" fill="#fff" stroke="#000"/><path d="M7.5 0.5 v3 h3" fill="none" stroke="#000"/></svg>
<svg style="position:absolute;left:235px;top:84px;" width="17" height="17" viewBox="0 0 17 17"><path d="M4.5 7 v-5.5 h7 l2 2 v3.5" fill="#fff" stroke="#000"/><path d="M6 3.5h5M6 5.5h5" stroke="#606060"/><path d="M1.5 9.5 q0 -3 3 -3 h8 q3 0 3 3 v5 h-14z" fill="#808080" stroke="#000"/><path d="M2 9.5 h13" stroke="#C0C0C0"/><path d="M2 11.5 h13" stroke="#E8E8A0" stroke-width="1.2"/><path d="M2 13.5 h13" stroke="#404040"/><rect x="3" y="14.5" width="11" height="1.5" fill="#303030"/></svg>
<div style="position:absolute;left:257px;top:82px;width:2px;height:21px;border-left:1px solid #808080;border-right:1px solid #fff;"></div>
<svg style="position:absolute;left:265px;top:84px;" width="17" height="17" viewBox="0 0 17 17"><circle cx="10" cy="6.5" r="5" fill="#fff" stroke="#000" stroke-width="1.4"/><path d="M7.5 6.5h5M10 4v5" stroke="#000" stroke-width="1.6"/><path d="M6.5 10 l-5 5" stroke="#000" stroke-width="2"/></svg>
<svg style="position:absolute;left:286px;top:84px;" width="17" height="17" viewBox="0 0 17 17"><circle cx="10" cy="6.5" r="5" fill="#fff" stroke="#000" stroke-width="1.4"/><path d="M7.5 6.5h5" stroke="#000" stroke-width="1.6"/><path d="M6.5 10 l-5 5" stroke="#000" stroke-width="2"/></svg>
<div style="position:absolute;left:213px;top:104px;width:515px;height:2px;border-top:1px solid #808080;border-bottom:1px solid #fff;"></div>
<div style="position:absolute;left:213px;top:106px;width:515px;height:446px;background:#D4D4D4;"></div>
<div style="position:absolute;left:448.08px;top:130px;white-space:nowrap;font-family:'Liberation Sans',sans-serif;font-size:11px;line-height:11px;will-change:transform;-webkit-text-stroke:0.2px currentColor;transform-origin:0 0;transform:scaleX(0.9224);">Impulse Response</div>
<svg style="position:absolute;left:275px;top:146px;" width="436" height="329" viewBox="0 0 436 329"><rect x="0" y="0" width="435" height="328" fill="#fff"/><path d="M0.5 327 V0.5 H434.5 V327" fill="none" stroke="#808080"/><path d="M43.5 327 v-4 M43.5 0 v4" stroke="#808080"/><path d="M87.5 327 v-4 M87.5 0 v4" stroke="#808080"/><path d="M130.5 327 v-4 M130.5 0 v4" stroke="#808080"/><path d="M174.5 327 v-4 M174.5 0 v4" stroke="#808080"/><path d="M217.5 327 v-4 M217.5 0 v4" stroke="#808080"/><path d="M260.5 327 v-4 M260.5 0 v4" stroke="#808080"/><path d="M304.5 327 v-4 M304.5 0 v4" stroke="#808080"/><path d="M347.5 327 v-4 M347.5 0 v4" stroke="#808080"/><path d="M391.5 327 v-4 M391.5 0 v4" stroke="#808080"/><path d="M0 36.5 h4 M434 36.5 h-4" stroke="#808080"/><path d="M0 73.5 h4 M434 73.5 h-4" stroke="#808080"/><path d="M0 109.5 h4 M434 109.5 h-4" stroke="#808080"/><path d="M0 145.5 h4 M434 145.5 h-4" stroke="#808080"/><path d="M0 182.5 h4 M434 182.5 h-4" stroke="#808080"/><path d="M0 218.5 h4 M434 218.5 h-4" stroke="#808080"/><path d="M0 254.5 h4 M434 254.5 h-4" stroke="#808080"/><path d="M0 291.5 h4 M434 291.5 h-4" stroke="#808080"/><path d="M0 327.5 H435" stroke="#000" stroke-dasharray="3 2"/><polyline points="0.50,326.50 1.37,292.05 2.24,260.94 3.10,232.88 3.97,207.60 4.84,184.87 5.71,164.45 6.58,146.14 7.44,129.77 8.31,115.15 9.18,102.14 10.05,90.58 10.92,80.36 11.78,71.36 12.65,63.45 13.52,56.56 14.39,50.58 15.26,45.44 16.12,41.05 16.99,37.36 17.86,34.29 18.73,31.79 19.60,29.81 20.46,28.30 21.33,27.21 22.20,26.51 23.07,26.16 23.94,26.13 24.80,26.38 25.67,26.90 26.54,27.64 27.41,28.59 28.28,29.74 29.14,31.05 30.01,32.51 30.88,34.11 31.75,35.84 32.62,37.67 33.48,39.59 34.35,41.61 35.22,43.69 36.09,45.84 36.96,48.05 37.82,50.31 38.69,52.62 39.56,54.96 40.43,57.33 41.30,59.72 42.16,62.14 43.03,64.57 43.90,67.02 44.77,69.48 45.64,71.94 46.50,74.40 47.37,76.87 48.24,79.33 49.11,81.79 49.98,84.25 50.84,86.69 51.71,89.13 52.58,91.56 53.45,93.97 54.32,96.37 55.18,98.76 56.05,101.13 56.92,103.49 57.79,105.83 58.66,108.15 59.52,110.46 60.39,112.75 61.26,115.02 62.13,117.27 63.00,119.50 63.86,121.71 64.73,123.90 65.60,126.07 66.47,128.23 67.34,130.36 68.20,132.47 69.07,134.56 69.94,136.63 70.81,138.69 71.68,140.72 72.54,142.73 73.41,144.72 74.28,146.69 75.15,148.64 76.02,150.57 76.88,152.48 77.75,154.37 78.62,156.24 79.49,158.10 80.36,159.93 81.22,161.74 82.09,163.54 82.96,165.31 83.83,167.07 84.70,168.81 85.56,170.53 86.43,172.23 87.30,173.91 88.17,175.58 89.04,177.22 89.90,178.85 90.77,180.46 91.64,182.06 92.51,183.64 93.38,185.20 94.24,186.74 95.11,188.27 95.98,189.78 96.85,191.27 97.72,192.75 98.58,194.21 99.45,195.66 100.32,197.09 101.19,198.50 102.06,199.90 102.92,201.29 103.79,202.65 104.66,204.01 105.53,205.35 106.40,206.67 107.26,207.98 108.13,209.28 109.00,210.56 109.87,211.83 110.74,213.08 111.60,214.32 112.47,215.55 113.34,216.76 114.21,217.96 115.08,219.15 115.94,220.32 116.81,221.49 117.68,222.63 118.55,223.77 119.42,224.89 120.28,226.01 121.15,227.10 122.02,228.19 122.89,229.27 123.76,230.33 124.62,231.38 125.49,232.42 126.36,233.45 127.23,234.47 128.10,235.48 128.96,236.47 129.83,237.46 130.70,238.43 131.57,239.40 132.44,240.35 133.30,241.29 134.17,242.22 135.04,243.14 135.91,244.06 136.78,244.96 137.64,245.85 138.51,246.73 139.38,247.61 140.25,248.47 141.12,249.32 141.98,250.17 142.85,251.00 143.72,251.83 144.59,252.64 145.46,253.45 146.32,254.25 147.19,255.04 148.06,255.82 148.93,256.60 149.80,257.36 150.66,258.12 151.53,258.87 152.40,259.61 153.27,260.34 154.14,261.06 155.00,261.78 155.87,262.48 156.74,263.19 157.61,263.88 158.48,264.56 159.34,265.24 160.21,265.91 161.08,266.57 161.95,267.23 162.82,267.88 163.68,268.52 164.55,269.15 165.42,269.78 166.29,270.40 167.16,271.01 168.02,271.62 168.89,272.22 169.76,272.82 170.63,273.40 171.50,273.98 172.36,274.56 173.23,275.13 174.10,275.69 174.97,276.24 175.84,276.79 176.70,277.34 177.57,277.88 178.44,278.41 179.31,278.93 180.18,279.45 181.04,279.97 181.91,280.48 182.78,280.98 183.65,281.48 184.52,281.97 185.38,282.46 186.25,282.94 187.12,283.42 187.99,283.89 188.86,284.35 189.72,284.82 190.59,285.27 191.46,285.72 192.33,286.17 193.20,286.61 194.06,287.05 194.93,287.48 195.80,287.91 196.67,288.33 197.54,288.74 198.40,289.16 199.27,289.57 200.14,289.97 201.01,290.37 201.88,290.77 202.74,291.16 203.61,291.54 204.48,291.93 205.35,292.30 206.22,292.68 207.08,293.05 207.95,293.41 208.82,293.78 209.69,294.13 210.56,294.49 211.42,294.84 212.29,295.18 213.16,295.53 214.03,295.87 214.90,296.20 215.76,296.53 216.63,296.86 217.50,297.18 218.37,297.51 219.24,297.82 220.10,298.14 220.97,298.45 221.84,298.75 222.71,299.06 223.58,299.36 224.44,299.65 225.31,299.95 226.18,300.24 227.05,300.53 227.92,300.81 228.78,301.09 229.65,301.37 230.52,301.64 231.39,301.92 232.26,302.18 233.12,302.45 233.99,302.71 234.86,302.97 235.73,303.23 236.60,303.49 237.46,303.74 238.33,303.99 239.20,304.23 240.07,304.48 240.94,304.72 241.80,304.96 242.67,305.19 243.54,305.42 244.41,305.65 245.28,305.88 246.14,306.11 247.01,306.33 247.88,306.55 248.75,306.77 249.62,306.99 250.48,307.20 251.35,307.41 252.22,307.62 253.09,307.83 253.96,308.03 254.82,308.23 255.69,308.43 256.56,308.63 257.43,308.83 258.30,309.02 259.16,309.21 260.03,309.40 260.90,309.59 261.77,309.77 262.64,309.95 263.50,310.14 264.37,310.31 265.24,310.49 266.11,310.67 266.98,310.84 267.84,311.01 268.71,311.18 269.58,311.35 270.45,311.51 271.32,311.68 272.18,311.84 273.05,312.00 273.92,312.16 274.79,312.32 275.66,312.47 276.52,312.62 277.39,312.78 278.26,312.93 279.13,313.07 280.00,313.22 280.86,313.37 281.73,313.51 282.60,313.65 283.47,313.79 284.34,313.93 285.20,314.07 286.07,314.21 286.94,314.34 287.81,314.47 288.68,314.60 289.54,314.74 290.41,314.86 291.28,314.99 292.15,315.12 293.02,315.24 293.88,315.36 294.75,315.49 295.62,315.61 296.49,315.73 297.36,315.84 298.22,315.96 299.09,316.08 299.96,316.19 300.83,316.30 301.70,316.41 302.56,316.52 303.43,316.63 304.30,316.74 305.17,316.85 306.04,316.95 306.90,317.06 307.77,317.16 308.64,317.26 309.51,317.36 310.38,317.46 311.24,317.56 312.11,317.66 312.98,317.76 313.85,317.85 314.72,317.95 315.58,318.04 316.45,318.13 317.32,318.23 318.19,318.32 319.06,318.41 319.92,318.49 320.79,318.58 321.66,318.67 322.53,318.75 323.40,318.84 324.26,318.92 325.13,319.01 326.00,319.09 326.87,319.17 327.74,319.25 328.60,319.33 329.47,319.41 330.34,319.48 331.21,319.56 332.08,319.64 332.94,319.71 333.81,319.79 334.68,319.86 335.55,319.93 336.42,320.00 337.28,320.08 338.15,320.15 339.02,320.22 339.89,320.28 340.76,320.35 341.62,320.42 342.49,320.49 343.36,320.55 344.23,320.62 345.10,320.68 345.96,320.74 346.83,320.81 347.70,320.87 348.57,320.93 349.44,320.99 350.30,321.05 351.17,321.11 352.04,321.17 352.91,321.23 353.78,321.29 354.64,321.34 355.51,321.40 356.38,321.46 357.25,321.51 358.12,321.57 358.98,321.62 359.85,321.67 360.72,321.73 361.59,321.78 362.46,321.83 363.32,321.88 364.19,321.93 365.06,321.98 365.93,322.03 366.80,322.08 367.66,322.13 368.53,322.18 369.40,322.22 370.27,322.27 371.14,322.32 372.00,322.36 372.87,322.41 373.74,322.45 374.61,322.50 375.48,322.54 376.34,322.58 377.21,322.63 378.08,322.67 378.95,322.71 379.82,322.75 380.68,322.79 381.55,322.83 382.42,322.87 383.29,322.91 384.16,322.95 385.02,322.99 385.89,323.03 386.76,323.07 387.63,323.11 388.50,323.14 389.36,323.18 390.23,323.22 391.10,323.25 391.97,323.29 392.84,323.32 393.70,323.36 394.57,323.39 395.44,323.43 396.31,323.46 397.18,323.49 398.04,323.53 398.91,323.56 399.78,323.59 400.65,323.62 401.52,323.65 402.38,323.68 403.25,323.72 404.12,323.75 404.99,323.78 405.86,323.81 406.72,323.84 407.59,323.86 408.46,323.89 409.33,323.92 410.20,323.95 411.06,323.98 411.93,324.01 412.80,324.03 413.67,324.06 414.54,324.09 415.40,324.11 416.27,324.14 417.14,324.16 418.01,324.19 418.88,324.22 419.74,324.24 420.61,324.27 421.48,324.29 422.35,324.31 423.22,324.34 424.08,324.36 424.95,324.38 425.82,324.41 426.69,324.43 427.56,324.45 428.42,324.48 429.29,324.50 430.16,324.52 431.03,324.54 431.90,324.56 432.76,324.58 433.63,324.61 434.50,324.63" fill="none" stroke="#3434D8" stroke-width="1.3"/></svg>
<div style="position:absolute;left:255.00px;top:141px;white-space:nowrap;font-family:'Liberation Sans',sans-serif;font-size:11px;line-height:11px;color:#505050;will-change:transform;-webkit-text-stroke:0.2px currentColor;transform-origin:0 0;transform:scaleX(0.8774);">450</div>
<div style="position:absolute;left:255.00px;top:177px;white-space:nowrap;font-family:'Liberation Sans',sans-serif;font-size:11px;line-height:11px;color:#505050;will-change:transform;-webkit-text-stroke:0.2px currentColor;transform-origin:0 0;transform:scaleX(0.8774);">400</div>
<div style="position:absolute;left:255.00px;top:214px;white-space:nowrap;font-family:'Liberation Sans',sans-serif;font-size:11px;line-height:11px;color:#505050;will-change:transform;-webkit-text-stroke:0.2px currentColor;transform-origin:0 0;transform:scaleX(0.8774);">350</div>
<div style="position:absolute;left:255.00px;top:250px;white-space:nowrap;font-family:'Liberation Sans',sans-serif;font-size:11px;line-height:11px;color:#505050;will-change:transform;-webkit-text-stroke:0.2px currentColor;transform-origin:0 0;transform:scaleX(0.8774);">300</div>
<div style="position:absolute;left:255.00px;top:286px;white-space:nowrap;font-family:'Liberation Sans',sans-serif;font-size:11px;line-height:11px;color:#505050;will-change:transform;-webkit-text-stroke:0.2px currentColor;transform-origin:0 0;transform:scaleX(0.8774);">250</div>
<div style="position:absolute;left:255.00px;top:323px;white-space:nowrap;font-family:'Liberation Sans',sans-serif;font-size:11px;line-height:11px;color:#505050;will-change:transform;-webkit-text-stroke:0.2px currentColor;transform-origin:0 0;transform:scaleX(0.8774);">200</div>
<div style="position:absolute;left:255.00px;top:359px;white-space:nowrap;font-family:'Liberation Sans',sans-serif;font-size:11px;line-height:11px;color:#505050;will-change:transform;-webkit-text-stroke:0.2px currentColor;transform-origin:0 0;transform:scaleX(0.8774);">150</div>
<div style="position:absolute;left:255.00px;top:395px;white-space:nowrap;font-family:'Liberation Sans',sans-serif;font-size:11px;line-height:11px;color:#505050;will-change:transform;-webkit-text-stroke:0.2px currentColor;transform-origin:0 0;transform:scaleX(0.8774);">100</div>
<div style="position:absolute;left:261.00px;top:432px;white-space:nowrap;font-family:'Liberation Sans',sans-serif;font-size:11px;line-height:11px;color:#505050;will-change:transform;-webkit-text-stroke:0.2px currentColor;transform-origin:0 0;transform:scaleX(0.8252);">50</div>
<div style="position:absolute;left:266.00px;top:468px;white-space:nowrap;font-family:'Liberation Sans',sans-serif;font-size:11px;line-height:11px;color:#505050;will-change:transform;-webkit-text-stroke:0.2px currentColor;transform-origin:0 0;transform:scaleX(0.8333);">0</div>
<div style="position:absolute;left:272.00px;top:477px;white-space:nowrap;font-family:'Liberation Sans',sans-serif;font-size:11px;line-height:11px;color:#505050;will-change:transform;-webkit-text-stroke:0.2px currentColor;transform-origin:0 0;transform:scaleX(0.8333);">0</div>
<div style="position:absolute;left:306.00px;top:477px;white-space:nowrap;font-family:'Liberation Sans',sans-serif;font-size:11px;line-height:11px;color:#505050;will-change:transform;-webkit-text-stroke:0.2px currentColor;transform-origin:0 0;transform:scaleX(0.8756);">0.001</div>
<div style="position:absolute;left:350.00px;top:477px;white-space:nowrap;font-family:'Liberation Sans',sans-serif;font-size:11px;line-height:11px;color:#505050;will-change:transform;-webkit-text-stroke:0.2px currentColor;transform-origin:0 0;transform:scaleX(0.8756);">0.002</div>
<div style="position:absolute;left:393.00px;top:477px;white-space:nowrap;font-family:'Liberation Sans',sans-serif;font-size:11px;line-height:11px;color:#505050;will-change:transform;-webkit-text-stroke:0.2px currentColor;transform-origin:0 0;transform:scaleX(0.8756);">0.003</div>
<div style="position:absolute;left:437.00px;top:477px;white-space:nowrap;font-family:'Liberation Sans',sans-serif;font-size:11px;line-height:11px;color:#505050;will-change:transform;-webkit-text-stroke:0.2px currentColor;transform-origin:0 0;transform:scaleX(0.8756);">0.004</div>
<div style="position:absolute;left:480.00px;top:477px;white-space:nowrap;font-family:'Liberation Sans',sans-serif;font-size:11px;line-height:11px;color:#505050;will-change:transform;-webkit-text-stroke:0.2px currentColor;transform-origin:0 0;transform:scaleX(0.8756);">0.005</div>
<div style="position:absolute;left:523.00px;top:477px;white-space:nowrap;font-family:'Liberation Sans',sans-serif;font-size:11px;line-height:11px;color:#505050;will-change:transform;-webkit-text-stroke:0.2px currentColor;transform-origin:0 0;transform:scaleX(0.8756);">0.006</div>
<div style="position:absolute;left:567.00px;top:477px;white-space:nowrap;font-family:'Liberation Sans',sans-serif;font-size:11px;line-height:11px;color:#505050;will-change:transform;-webkit-text-stroke:0.2px currentColor;transform-origin:0 0;transform:scaleX(0.8756);">0.007</div>
<div style="position:absolute;left:610.00px;top:477px;white-space:nowrap;font-family:'Liberation Sans',sans-serif;font-size:11px;line-height:11px;color:#505050;will-change:transform;-webkit-text-stroke:0.2px currentColor;transform-origin:0 0;transform:scaleX(0.8756);">0.008</div>
<div style="position:absolute;left:654.00px;top:477px;white-space:nowrap;font-family:'Liberation Sans',sans-serif;font-size:11px;line-height:11px;color:#505050;will-change:transform;-webkit-text-stroke:0.2px currentColor;transform-origin:0 0;transform:scaleX(0.8756);">0.009</div>
<div style="position:absolute;left:700.00px;top:477px;white-space:nowrap;font-family:'Liberation Sans',sans-serif;font-size:11px;line-height:11px;color:#505050;will-change:transform;-webkit-text-stroke:0.2px currentColor;transform-origin:0 0;transform:scaleX(0.8924);">0.01</div>
<div style="position:absolute;left:467.00px;top:497px;white-space:nowrap;font-family:'Liberation Sans',sans-serif;font-size:11px;line-height:11px;will-change:transform;-webkit-text-stroke:0.2px currentColor;transform-origin:0 0;transform:scaleX(0.9435);">Time (sec)</div>
<div style="position:absolute;left:239px;top:337px;white-space:nowrap;font-family:'Liberation Sans',sans-serif;font-size:11px;line-height:11px;will-change:transform;transform-origin:0 0;transform:rotate(-90deg) scaleX(1.04);">Amplitude</div>
<div style="position:absolute;left:224px;top:516px;width:493px;height:34px;background:#D8D5CE;border:1px solid #303030;border-bottom:2px solid #303030;border-right:2px solid #303030;"></div>
<div style="position:absolute;left:230.00px;top:519px;white-space:nowrap;font-family:'Liberation Sans',sans-serif;font-size:11px;line-height:11px;will-change:transform;-webkit-text-stroke:0.2px currentColor;transform-origin:0 0;transform:scaleX(0.9151);">Change the number and type of response plots shown in this LTI Viewer.</div>
</body></html>
